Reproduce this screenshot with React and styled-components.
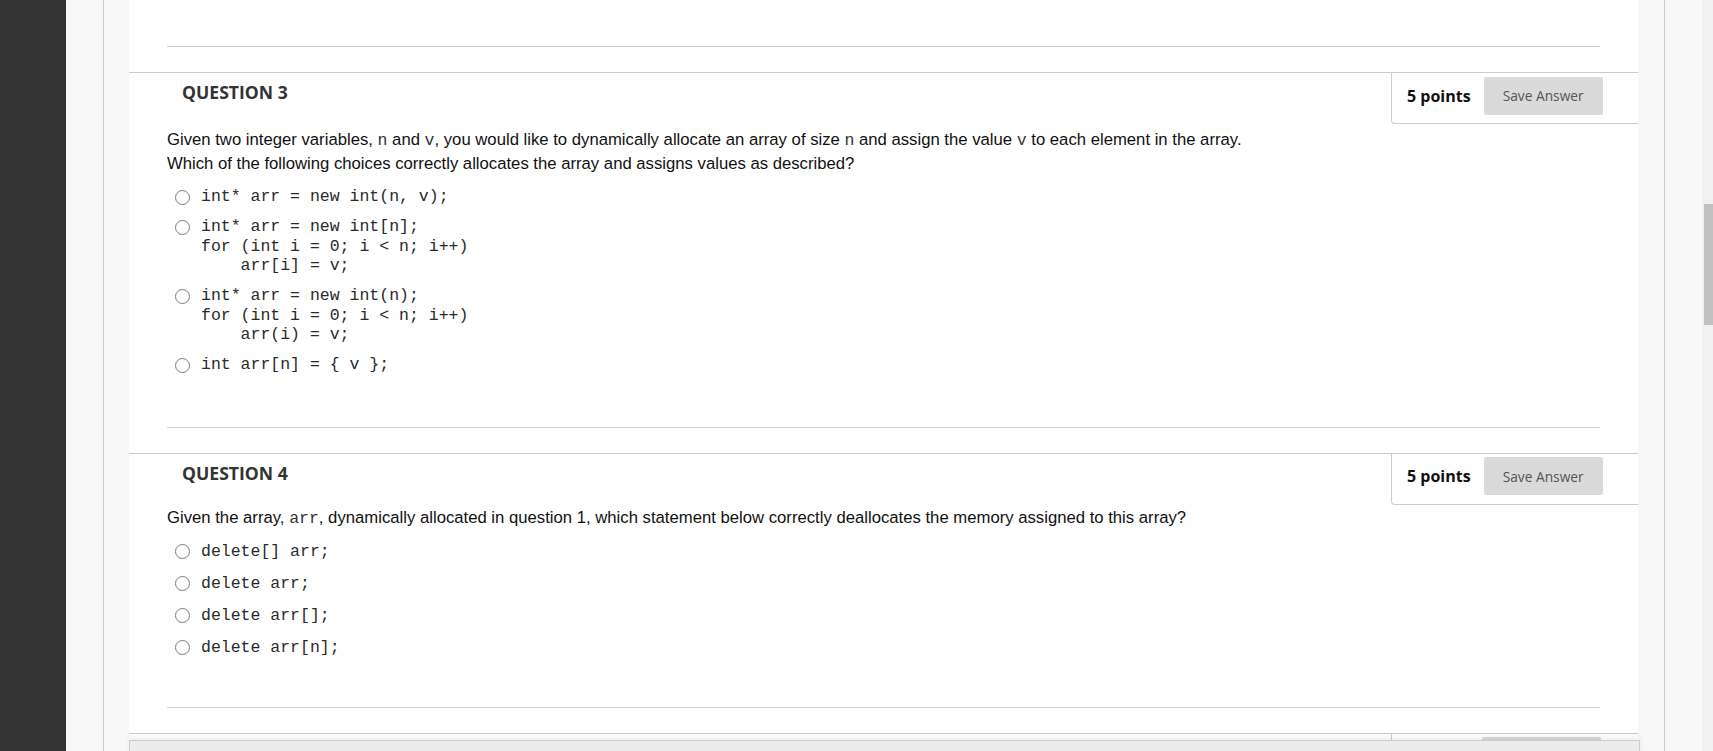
import React from "react";
import styled, { createGlobalStyle } from "styled-components";

const GlobalStyle = createGlobalStyle`
  html, body { margin: 0; padding: 0; height: 100%; overflow: hidden; }
  body { background: #f8f8f8; }
  * { box-sizing: border-box; }
`;

const Page = styled.div`
  display: flex;
  height: 751px;
  overflow: hidden;
`;

const Sidebar = styled.div`
  width: 66px;
  flex: none;
  background: #333333;
`;

const Main = styled.div`
  flex: 1;
  background: #f8f8f8;
  padding: 0 37px;
  display: flex;
  min-width: 0;
`;

const Frame = styled.div`
  position: relative;
  flex: 1;
  border-left: 1px solid #cccccc;
  border-right: 1px solid #cccccc;
  padding: 0 26px 0 25px;
  overflow: hidden;
`;

const Content = styled.div`
  background: #ffffff;
  height: 100%;
  padding-top: 46px;
`;

const Rule = styled.hr`
  border: 0;
  border-top: 1px solid #cfcfcf;
  height: 0;
  margin: ${(p) => (p.$mt != null ? `${p.$mt}px 0 0` : "0 38px")};
`;

const Section = styled.section`
  margin-top: 25px;
`;

const Header = styled.div`
  display: flex;
  justify-content: space-between;
  align-items: flex-start;
  border-top: 1px solid #cccccc;
`;

const Title = styled.h2`
  margin: 0;
  padding: 7px 0 0 53px;
  font-family: "Open Sans", sans-serif;
  font-weight: 700;
  font-size: 17.6px;
  line-height: 24px;
  color: #333333;
`;

const PointsBox = styled.div`
  width: 247px;
  height: 51px;
  margin-left: auto;
  display: flex;
  align-items: center;
  gap: 13px;
  padding: 3px 37px 8px 15px;
  border-left: 1px solid #cccccc;
  border-bottom: 1px solid #cccccc;
  border-bottom-left-radius: 4px;
`;

const Points = styled.span`
  font-family: "Open Sans", sans-serif;
  font-weight: 700;
  font-size: 16px;
  color: #111111;
  white-space: nowrap;
`;

const SaveButton = styled.button`
  width: 119px;
  height: 38px;
  flex: none;
  margin-left: auto;
  border: 0;
  border-radius: 2px;
  background: #dadada;
  font-family: "Open Sans", sans-serif;
  font-size: 13.75px;
  color: #555555;
  padding: 0;
`;

const Body = styled.div`
  padding: ${(p) => p.$pt}px 38px 0;
`;

const Prompt = styled.p`
  margin: 0;
  font-family: "Liberation Sans", Arial, sans-serif;
  font-size: 16.7px;
  line-height: 24px;
  color: #111111;
`;

const InlineCode = styled.code`
  font-family: "Liberation Mono", "Courier New", monospace;
  font-size: 16.5px;
  line-height: 1;
  color: #333333;
`;

const Options = styled.ul`
  list-style: none;
  margin: ${(p) => p.$mt}px 0 0;
  padding: 0 0 0 8px;
  display: flex;
  flex-direction: column;
  gap: ${(p) => p.$gap}px;
`;

const Option = styled.li`
  display: flex;
  align-items: flex-start;
  gap: 11px;
`;

const Radio = styled.span`
  flex: none;
  width: 15px;
  height: 15px;
  margin-top: 2.5px;
  border-radius: 50%;
  border: 1.5px solid #7d7d7d;
  background: #ffffff;
`;

const Code = styled.pre`
  margin: 0;
  font-family: "Liberation Mono", "Courier New", monospace;
  font-size: 16.5px;
  line-height: 19.5px;
  color: #2a2a2a;
`;

const Footer = styled.div`
  position: absolute;
  left: 25px;
  right: 24px;
  bottom: -20px;
  height: 31px;
  background: #ececec;
  border: 1px solid #cccccc;
  box-shadow: 0 -3px 6px rgba(0, 0, 0, 0.07);
`;

const Scrollbar = styled.div`
  width: 11px;
  flex: none;
  background: #f1f1f1;
  padding: 204px 0 0 2px;
`;

const Thumb = styled.div`
  width: 9px;
  height: 121px;
  background: #c1c1c1;
`;

function Question({ number, prompts, options, gap, pt, optTop, ruleTop }) {
  return (
    <Section>
      <Header>
        <Title>QUESTION {number}</Title>
        <PointsBox>
          <Points>5 points</Points>
          <SaveButton>Save Answer</SaveButton>
        </PointsBox>
      </Header>
      <Body $pt={pt}>
        {prompts.map((p, i) => (
          <Prompt key={i}>{p}</Prompt>
        ))}
        <Options $gap={gap} $mt={optTop}>
          {options.map((o, i) => (
            <Option key={i}>
              <Radio />
              <Code>{o}</Code>
            </Option>
          ))}
        </Options>
        <Rule $mt={ruleTop} />
      </Body>
    </Section>
  );
}

/* The next question's header: only its top edge peeks out above the footer bar */
function NextQuestionEdge() {
  return (
    <Section>
      <Header>
        <PointsBox>
          <SaveButton aria-label="Save Answer" />
        </PointsBox>
      </Header>
    </Section>
  );
}

const q3Prompts = [
  <>
    Given two integer variables, <InlineCode>n</InlineCode> and <InlineCode>v</InlineCode>, you would like to
    dynamically allocate an array of size <InlineCode>n</InlineCode> and assign the value{" "}
    <InlineCode>v</InlineCode> to each element in the array.
  </>,
  "Which of the following choices correctly allocates the array and assigns values as described?",
];

const q3Options = [
  "int* arr = new int(n, v);",
  "int* arr = new int[n];\nfor (int i = 0; i < n; i++)\n    arr[i] = v;",
  "int* arr = new int(n);\nfor (int i = 0; i < n; i++)\n    arr(i) = v;",
  "int arr[n] = { v };",
];

const q4Prompts = [
  <>
    Given the array, <InlineCode>arr</InlineCode>, dynamically allocated in question 1, which statement below
    correctly deallocates the memory assigned to this array?
  </>,
];

const q4Options = ["delete[] arr;", "delete arr;", "delete arr[];", "delete arr[n];"];

export default function App() {
  return (
    <>
      <GlobalStyle />
      <Page>
        <Sidebar />
        <Main>
          <Frame>
            <Content>
              <Rule />
              <Question
                number={3}
                prompts={q3Prompts}
                options={q3Options}
                gap={10.5}
                pt={4}
                optTop={11}
                ruleTop={52}
              />
              <Question
                number={4}
                prompts={q4Prompts}
                options={q4Options}
                gap={12.5}
                pt={1}
                optTop={12}
                ruleTop={49.5}
              />
              <NextQuestionEdge />
            </Content>
            <Footer />
          </Frame>
        </Main>
        <Scrollbar>
          <Thumb />
        </Scrollbar>
      </Page>
    </>
  );
}
